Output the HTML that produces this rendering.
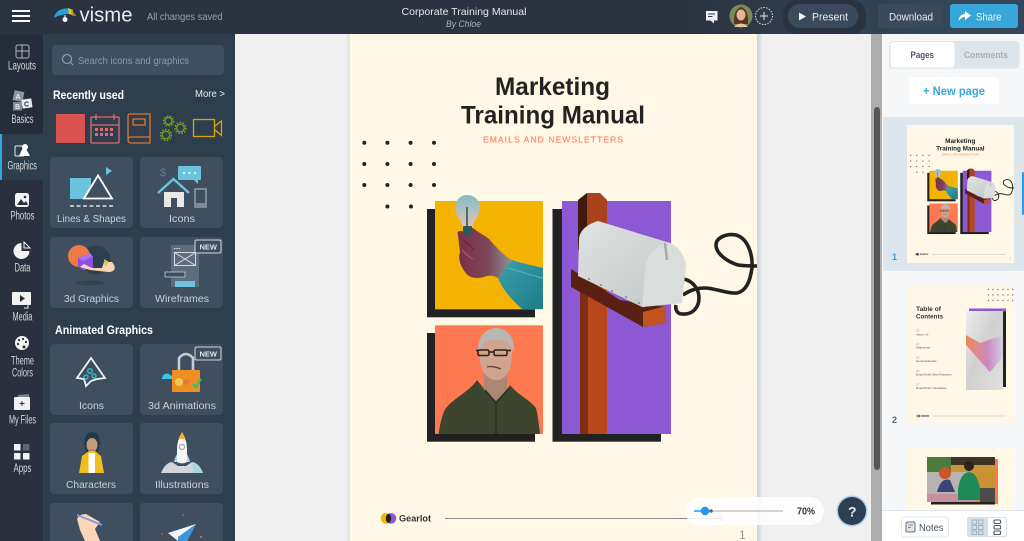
<!DOCTYPE html>
<html lang="en"><head><meta charset="utf-8"><title>Corporate Training Manual</title>
<style>
html,body{margin:0;padding:0;width:1024px;height:541px;overflow:hidden;background:#f0f0f0}
svg{display:block;filter:blur(.3px)}
text{font-family:"Liberation Sans",sans-serif}
.r{fill:#d5d9de;font-size:11.5px}
.l{fill:#c8cfd6;font-size:10px}
.t{fill:#3f4f60}
.h{fill:#fff;font-size:11.5px;font-weight:700}
</style></head><body>
<svg width="1024" height="541" viewBox="0 0 1024 541" xmlns="http://www.w3.org/2000/svg">
<defs>
<linearGradient id="bar" x1="0" x2="1" y1="0" y2="0"><stop offset=".66" stop-color="#2b3240"/><stop offset=".9" stop-color="#34465a"/><stop offset="1" stop-color="#34465a"/></linearGradient>
<linearGradient id="bulb" x1="0" x2="0" y1="0" y2="1"><stop offset="0" stop-color="#86bcc6"/><stop offset="1" stop-color="#e0c4b8"/></linearGradient>
<linearGradient id="hand" x1="0" x2="1" y1="0" y2="0"><stop offset="0" stop-color="#7a2f4a"/><stop offset=".55" stop-color="#7c4658"/><stop offset="1" stop-color="#8f9296"/></linearGradient>
<linearGradient id="sl" x1="0" x2="1" y1="0" y2="1"><stop offset="0" stop-color="#3aa1ab"/><stop offset="1" stop-color="#1f7b88"/></linearGradient>
<linearGradient id="box" x1="0" x2="1" y1="0" y2="1"><stop offset="0" stop-color="#dfe3e2"/><stop offset="1" stop-color="#c0c6c5"/></linearGradient>
<linearGradient id="sh" x1="0" x2="1" y1="0" y2="0"><stop offset="0" stop-color="#c9d2dc"/><stop offset="1" stop-color="#f0f0f0"/></linearGradient>
<linearGradient id="shl" x1="1" x2="0" y1="0" y2="0"><stop offset="0" stop-color="#dde2e8"/><stop offset="1" stop-color="#f0f0f0"/></linearGradient>
<linearGradient id="tocimg" x1="0" x2="1" y1="0" y2="1"><stop offset="0" stop-color="#eceded"/><stop offset=".45" stop-color="#d0d0d0"/><stop offset="1" stop-color="#e0e0e0"/></linearGradient>
<linearGradient id="tocp" x1="0" x2="1" y1="0" y2="0"><stop offset="0" stop-color="#f0875a"/><stop offset=".6" stop-color="#c98bc0"/><stop offset="1" stop-color="#d0d0e0"/></linearGradient>
<clipPath id="c1"><rect x="350" y="27" width="407" height="525"/></clipPath>
<clipPath id="t3"><rect x="907" y="447" width="107" height="63"/></clipPath>
<filter id="soft"><feGaussianBlur stdDeviation="2"/></filter>
</defs>

<!-- workspace -->
<rect width="1024" height="541" fill="#f0f0f0"/>
<rect x="345" y="34" width="5" height="507" fill="url(#shl)"/>
<rect x="757" y="34" width="6" height="507" fill="url(#sh)"/>
<rect x="871" y="34" width="11" height="507" fill="#adadad"/>
<rect x="874" y="107" width="6" height="363" rx="3" fill="#565656"/>

<!-- page -->
<g id="pg" clip-path="url(#c1)">
<rect x="350" y="27" width="407" height="525" fill="#fff8e6"/>
<text x="495" y="95" font-size="25" font-weight="700" fill="#222" textLength="115" lengthAdjust="spacingAndGlyphs">Marketing</text>
<text x="461" y="123.5" font-size="25" font-weight="700" fill="#222" textLength="184" lengthAdjust="spacingAndGlyphs">Training Manual</text>
<text x="483" y="142.5" font-size="8.500" fill="#ff8a68" stroke="#ff8a68" stroke-width=".2" textLength="140" lengthAdjust="spacing">EMAILS AND NEWSLETTERS</text>
<g fill="#222">
<circle cx="364.3" cy="142.7" r="2"/><circle cx="387.4" cy="142.7" r="2"/><circle cx="410.6" cy="142.7" r="2"/><circle cx="434" cy="142.7" r="2"/>
<circle cx="364.3" cy="164" r="2"/><circle cx="387.4" cy="164" r="2"/><circle cx="410.6" cy="164" r="2"/><circle cx="434" cy="164" r="2"/>
<circle cx="364.3" cy="185" r="2"/><circle cx="387.4" cy="185" r="2"/><circle cx="410.6" cy="185" r="2"/><circle cx="434" cy="185" r="2"/>
<circle cx="387.4" cy="206.5" r="2"/><circle cx="411" cy="206.5" r="2"/>
<!-- shadows -->
<rect x="427" y="209" width="108" height="108.300"/>
<rect x="427" y="333" width="108" height="108.700"/>
<rect x="552.500" y="209" width="108.500" height="232.700"/>
</g>
<rect x="435" y="201" width="108" height="108.300" fill="#f4b300"/>
<rect x="435" y="325.300" width="108" height="108.700" fill="#ff7950"/>
<rect x="562" y="201" width="109" height="233" fill="#8c58d4"/>
<!-- hand and bulb -->
<path d="M458 235C456 231 461 230 464 232L473 228C479 233 484 235 489 239C497 248 504 256 512 260L498 278C493 275 489 275 484 277C476 279 469 278 465 272C460 265 458 259 460 252Z" fill="url(#hand)"/>
<path d="M463 240C467 243 471 246 474 250" stroke="#5d2238" stroke-width="1" fill="none"/>
<path d="M462 250C466 254 469 257 473 259" stroke="#c05a5a" stroke-width="1" fill="none"/>
<path d="M512 260L522 263L543 268V309H522C512 300 503 290 498 278Z" fill="url(#sl)"/>
<path d="M508 268C520 271 532 276 543 278" stroke="#4cb3bd" stroke-width="1.200" fill="none"/>
<path d="M467 195C475 195 480 201 480 208C480 215 474 219 472 228H463C461 219 455 215 455 208C455 201 460 195 467 195Z" fill="url(#bulb)"/>
<path d="M467 207V226" stroke="#35565a" stroke-width="1.600"/>
<rect x="463" y="226" width="9" height="9" rx="1" fill="#2c5a5c"/>
<!-- man -->
<path d="M438.600 434C440 424 442 414 446 408C454 398 470 391 477 380L485 390H507L510 385C518 395 530 400 536 408C538 416 539 426 540 434Z" fill="#3e452f"/>
<path d="M484 368H507V390L496 401L484 390Z" fill="#ac8573"/>
<path d="M479 345C479 334 488 329 496 329C505 329 513 335 513 346L511 364C509 375 502 381 495 380C487 379 482 372 480 362Z" fill="#cfa592"/>
<path d="M478.500 353C476 338 486 328 496 328C507 328 515 337 514 353L511 346C508 341 502 339 497 339C490 339 484 341 481 346Z" fill="#b9b7b2"/>
<g fill="none" stroke="#2d1d18" stroke-width="1.500"><rect x="478" y="350" width="11" height="5.500" rx="1.500"/><rect x="494" y="350" width="13" height="5.500" rx="1.500"/><path d="M476 350.500H478M489 352H494M507 350.500H511"/></g>
<path d="M487 367C491 366 497 367 501 369" stroke="#6d4437" stroke-width="1.400" fill="none"/>
<path d="M485 390L496 403L509 388M496 403V434" stroke="#2a301f" stroke-width="1.600" fill="none"/>
<!-- mailbox -->
<path d="M578 200L587 193H600L607 200V250H578Z" fill="#a8431e"/>
<path d="M578 200L587 193V250H578Z" fill="#40190f"/>
<path d="M580 285H607V434H580Z" fill="#b8471c"/>
<path d="M580 285H588V434H580Z" fill="#7d2e14"/>
<path d="M571 269L571 287L643 327L665 323L666 307L620 300Z" fill="#5a2013"/>
<path d="M643 312L666 306L665 323L643 327Z" fill="#c4531f"/>
<path d="M684 279C692 281 699 288 699 298C699 308 692 315 682 314C677 314 675 309 676 305" fill="none" stroke="#222" stroke-width="3.600"/>
<path d="M683 295C689 291 695 288 705 288C715 288 727 294 737 293C746 291 750 282 752 268C753 253 747 238 736 235C726 233 716 238 716 245C716 254 728 262 738 265C745 266 751 266 757 266" fill="none" stroke="#222" stroke-width="3.600"/>
<path d="M579 240C579 232 585 225 598 221L667 242C677 245 683 252 686 265L682 303L642 307L578 276Z" fill="url(#box)"/>
<path d="M667 242C677 245 683 252 686 265L682 303L642 307L646 262C650 252 658 245 667 242Z" fill="#d9dddc"/>
<path d="M665 243L667 260" stroke="#a5abab" stroke-width="2.400"/>
<g fill="#555"><circle cx="589" cy="279" r=".8"/><circle cx="601" cy="285" r=".8"/><circle cx="612" cy="291" r=".8"/><circle cx="626" cy="297" r=".8"/><circle cx="639" cy="303" r=".8"/></g>
<!-- footer -->
<circle cx="386" cy="518.400" r="5.300" fill="#f4b300"/><circle cx="391" cy="518.400" r="5.300" fill="#8c58d4"/><ellipse cx="388.500" cy="518.400" rx="2.600" ry="4.500" fill="#222"/>
<text x="399" y="521.500" font-size="9" font-weight="700" fill="#333" textLength="32" lengthAdjust="spacingAndGlyphs">Gearlot</text>
<path d="M445 518.500H722M719 515.500L723 518.500L719 522" stroke="#888" fill="none"/>
<text x="739" y="539" font-size="12" fill="#999">1</text>
</g>

<!-- zoom pill -->
<rect x="685" y="497" width="139" height="28" rx="14" fill="#fff" fill-opacity=".85"/>
<path d="M705 511H783" stroke="#aaa"/><path d="M694 511H705" stroke="#2196f3" stroke-width="1.500"/>
<circle cx="711" cy="511" r="1.800" fill="#666"/><circle cx="705" cy="511" r="4.200" fill="#2196f3"/>
<text x="797" y="514.500" font-size="10" font-weight="700" fill="#333" textLength="18" lengthAdjust="spacingAndGlyphs">70%</text>
<circle cx="852" cy="511" r="15.500" fill="#b4cce6"/><circle cx="852" cy="511" r="14" fill="#2c3e50"/>
<text x="848" y="516.500" font-size="14" font-weight="700" fill="#e8edf2">?</text>

<!-- rail + panel -->
<rect x="0" y="34" width="43" height="507" fill="#2a303d"/>
<rect x="0" y="34" width="43" height="100" fill="#262d3a"/>
<rect x="43" y="34" width="192" height="507" fill="#2f3e4d"/>
<rect x="0" y="134" width="43" height="46" fill="#2f3e4d"/>
<rect x="0" y="134" width="2" height="46" fill="#35a7e0"/>

<!-- rail icons -->
<g fill="none" stroke="#aeb5bd" stroke-width="1"><rect x="16" y="45" width="13" height="13" rx="2"/><path d="M16 51H29M22 45V58"/></g>
<g font-size="7" font-weight="700">
<rect x="13.500" y="91" width="10" height="10" fill="#8a95a0" transform="rotate(12 18 96)"/><rect x="13" y="102" width="9" height="8.500" fill="#7b8a99"/><rect x="22" y="99" width="10" height="9" fill="#e9ecef" transform="rotate(-8 27 104)"/>
<text x="15.500" y="99" fill="#e9ecef">A</text><text x="15" y="109" fill="#e9ecef">B</text><text x="24" y="106.500" fill="#2a303d">C</text></g>
<rect x="15" y="146" width="9" height="10" rx="1" fill="none" stroke="#eee"/><path d="M24 145L30 156H19Z" fill="#fff"/><circle cx="25" cy="147" r="3" fill="#fff"/>
<rect x="15" y="193" width="14" height="14" rx="2.500" fill="#f2f2f2"/><path d="M17 205L21 199L24 203L26 201L28 205Z" fill="#2a303d"/><circle cx="25" cy="197" r="1.300" fill="#2a303d"/>
<path d="M21.500 243V251H29.500A8 8 0 1 1 21.500 243Z" fill="#f2f2f2"/><path d="M24 242L30 248H24Z" fill="none" stroke="#f2f2f2"/>
<rect x="12" y="292" width="19" height="13" rx="1" fill="#f2f2f2"/><path d="M20 295L25 298.500L20 302Z" fill="#2a303d"/><path d="M28 305V308L24 308" stroke="#f2f2f2" fill="none"/>
<circle cx="22" cy="343" r="7" fill="#f2f2f2"/><g fill="#2a303d"><circle cx="19" cy="340" r="1.100"/><circle cx="23" cy="339" r="1.100"/><circle cx="26" cy="342" r="1.100"/><circle cx="18" cy="344" r="1.100"/><circle cx="24" cy="347" r="1.500"/></g>
<path d="M18 395L29 394V397H18Z" fill="#7b838e"/><rect x="14" y="397" width="16" height="13" rx="1" fill="#f2f2f2"/><path d="M22 401V406M19.500 403.500H24.500" stroke="#2a303d"/>
<g fill="#f2f2f2"><rect x="14" y="444" width="6.500" height="6.500"/><rect x="14" y="453" width="6.500" height="6.500"/><rect x="23" y="453" width="6.500" height="6.500"/></g><rect x="23" y="444" width="6.500" height="6.500" fill="#5d6773"/>

<text class="r" x="8" y="69.500" textLength="28" lengthAdjust="spacingAndGlyphs">Layouts</text>
<text class="r" x="11.500" y="123" textLength="22" lengthAdjust="spacingAndGlyphs">Basics</text>
<text class="r" x="7.500" y="169.500" textLength="29.500" lengthAdjust="spacingAndGlyphs">Graphics</text>
<text class="r" x="10.500" y="219.500" textLength="24" lengthAdjust="spacingAndGlyphs">Photos</text>
<text class="r" x="14.500" y="271.500" textLength="16" lengthAdjust="spacingAndGlyphs">Data</text>
<text class="r" x="12.500" y="320.500" textLength="20" lengthAdjust="spacingAndGlyphs">Media</text>
<text class="r" x="11" y="364.500" textLength="23" lengthAdjust="spacingAndGlyphs">Theme</text>
<text class="r" x="12" y="376.500" textLength="21" lengthAdjust="spacingAndGlyphs">Colors</text>
<text class="r" x="9" y="423.500" textLength="27" lengthAdjust="spacingAndGlyphs">My Files</text>
<text class="r" x="13.500" y="472" textLength="18" lengthAdjust="spacingAndGlyphs">Apps</text>

<!-- search -->
<rect x="52" y="45" width="172" height="30" rx="4" fill="#3f4f60"/>
<circle cx="67" cy="59" r="4.500" fill="none" stroke="#97a3ae" stroke-width="1.100"/><path d="M70.500 62.500L73 65" stroke="#97a3ae" stroke-width="1.100"/>
<text x="78" y="64" font-size="10.500" fill="#8e9aa6" textLength="111" lengthAdjust="spacingAndGlyphs">Search icons and graphics</text>
<text class="h" x="53" y="99" textLength="71" lengthAdjust="spacingAndGlyphs">Recently used</text>
<text x="195" y="97" font-size="10" fill="#e8ecef" textLength="30" lengthAdjust="spacingAndGlyphs">More &gt;</text>

<!-- recent icons -->
<rect x="56" y="114" width="29" height="29" fill="#d9534f"/>
<g fill="none" stroke="#e06a6e" stroke-width="1.300"><rect x="91" y="117" width="28" height="26" rx="1"/><path d="M91 125H119M96 114V120M114 114V120"/></g>
<g fill="#e06a6e"><rect x="95" y="128" width="3" height="3"/><rect x="100" y="128" width="3" height="3"/><rect x="105" y="128" width="3" height="3"/><rect x="110" y="128" width="3" height="3"/><rect x="95" y="133" width="3" height="3"/><rect x="100" y="133" width="3" height="3"/><rect x="105" y="133" width="3" height="3"/><rect x="110" y="133" width="3" height="3"/></g>
<g fill="none" stroke="#e0762f" stroke-width="1.300"><path d="M128 138V116Q128 114 130 114H150V137H131Q128 137 128 140T131 143H150V137"/><rect x="133" y="119" width="12" height="6"/></g>
<g fill="none" stroke="#7fa61f"><circle cx="168.500" cy="121" r="3.500" stroke-width="1.200"/><circle cx="168.500" cy="121" r="5" stroke-width="1.400" stroke-dasharray="1.600 1.500"/><circle cx="180.500" cy="128" r="3.800" stroke-width="1.200"/><circle cx="180.500" cy="128" r="5.500" stroke-width="1.400" stroke-dasharray="1.600 1.500"/><circle cx="166" cy="135" r="3.800" stroke-width="1.200"/><circle cx="166" cy="135" r="5.500" stroke-width="1.400" stroke-dasharray="1.600 1.500"/></g>
<g fill="none" stroke="#d9a514" stroke-width="1.300"><rect x="193.500" y="119.500" width="21" height="17"/><path d="M215 126L221.500 121V135.500L215 130"/></g>

<!-- tiles -->
<rect class="t" x="50" y="157" width="83" height="71" rx="4"/><rect class="t" x="140" y="157" width="83" height="71" rx="4"/>
<rect class="t" x="50" y="237" width="83" height="71" rx="4"/><rect class="t" x="140" y="237" width="83" height="71" rx="4"/>
<rect class="t" x="50" y="344" width="83" height="71" rx="4"/><rect class="t" x="140" y="344" width="83" height="71" rx="4"/>
<rect class="t" x="50" y="423" width="83" height="71" rx="4"/><rect class="t" x="140" y="423" width="83" height="71" rx="4"/>
<rect class="t" x="50" y="503" width="83" height="50" rx="4"/><rect class="t" x="140" y="503" width="83" height="50" rx="4"/>

<text class="l" x="57" y="222" textLength="69" lengthAdjust="spacingAndGlyphs">Lines &amp; Shapes</text>
<text class="l" x="169" y="222" textLength="26" lengthAdjust="spacingAndGlyphs">Icons</text>
<text class="l" x="64" y="302" textLength="55" lengthAdjust="spacingAndGlyphs">3d Graphics</text>
<text class="l" x="155" y="302" textLength="54" lengthAdjust="spacingAndGlyphs">Wireframes</text>
<text class="h" x="55" y="334" textLength="98" lengthAdjust="spacingAndGlyphs">Animated Graphics</text>
<text class="l" x="79" y="409" textLength="25" lengthAdjust="spacingAndGlyphs">Icons</text>
<text class="l" x="148" y="409" textLength="68" lengthAdjust="spacingAndGlyphs">3d Animations</text>
<text class="l" x="66" y="488" textLength="50" lengthAdjust="spacingAndGlyphs">Characters</text>
<text class="l" x="155" y="488" textLength="54" lengthAdjust="spacingAndGlyphs">Illustrations</text>

<!-- lines & shapes -->
<rect x="70" y="178" width="21" height="21" fill="#6cc3dd"/><path d="M84 198.500L98 175.500L112 198.500Z" fill="#3f4f60" stroke="#fff" stroke-width="1.800"/><path d="M106 167L112 171L106 175Z" fill="#6cc3dd"/><path d="M70 206H113" stroke="#fff" stroke-width="1.200" stroke-dasharray="4 2.500"/>
<!-- icons -->
<text x="160" y="176" font-size="11" fill="#6d7c8b">$</text>
<path d="M179 166H200Q201 166 201 167V179Q201 180 200 180H198V184L194 180H179Q178 180 178 179V167Q178 166 179 166Z" fill="#6cc3dd"/><g fill="#fff"><circle cx="184" cy="173" r="1"/><circle cx="189.500" cy="173" r="1"/><circle cx="195" cy="173" r="1"/></g>
<path d="M164 192H184V207H177V198H171V207H164Z" fill="#e8e8e8"/><path d="M158 193L173.500 179L189 193" fill="none" stroke="#6cc3dd" stroke-width="2.400"/>
<rect x="194" y="188" width="13" height="20" rx="1" fill="#7d8a98"/><rect x="196" y="190" width="9" height="13" fill="#3f4f60"/>
<!-- 3d -->
<ellipse cx="90" cy="283" rx="14" ry="2.500" fill="#35434f"/><circle cx="96" cy="260" r="14.500" fill="#2c3e50"/><circle cx="79" cy="256" r="11" fill="#ef7a45"/>
<path d="M78 258L90 253L93 257V268L83 270L78 266Z" fill="#8b4fe0"/><path d="M78 258L90 253L93 257L83 261Z" fill="#a874ee"/>
<path d="M104 262L112 262C117 268 115 272 108 272L90 270L80 267L84 264L92 268L102 268Z" fill="#f5d4b2"/><path d="M104 259L109 262L105 267Z" fill="#d0d13a"/>
<!-- wireframes -->
<rect x="171" y="245" width="28" height="42" rx="1" fill="#5d6d7e"/><path d="M174.500 252.500H195.500V265.500H174.500ZM174.500 252.500L195.500 265.500M195.500 252.500L174.500 265.500" fill="none" stroke="#d5dadf"/><rect x="165" y="272" width="20" height="5" fill="#3f4f60" stroke="#c2c9d0" stroke-width=".8"/><rect x="175" y="281" width="20" height="6" fill="#6cc3dd"/><path d="M174 248.500H180" stroke="#dfe4e8" stroke-dasharray="1.400 1"/>
<rect x="195" y="240" width="26" height="13" rx="1.500" fill="#3f4f60" stroke="#cfd5da"/><text x="199.500" y="249.500" font-size="7.500" font-weight="700" fill="#dfe4e8">NEW</text>
<!-- anim icons -->
<path d="M91 358L77 378L84 379L86 386L91 381L97 379L105 378Z" fill="none" stroke="#f0f2f4" stroke-width="1.800"/><g fill="none" stroke="#37b6c4" stroke-width="1.500"><circle cx="90" cy="371" r="2.300"/><circle cx="86" cy="377" r="2"/><circle cx="94" cy="376" r="2"/></g>
<!-- 3d anim -->
<path d="M179 370V358Q186 350 193 358V370" fill="none" stroke="#c9cdd0" stroke-width="2.600"/><path d="M162 378Q164 372 169 374L172 376V379H162Z" fill="#35c6ea"/><rect x="172" y="370" width="28" height="22" rx="1" fill="#ee8f22"/><circle cx="179" cy="382" r="4" fill="#f3c74e"/><circle cx="186" cy="382" r="3" fill="#e8754a"/><path d="M193 384L196 387L201 379" fill="none" stroke="#25c26d" stroke-width="2"/>
<rect x="195" y="347" width="26" height="13" rx="1.500" fill="#3f4f60" stroke="#cfd5da"/><text x="199.500" y="356.500" font-size="7.500" font-weight="700" fill="#dfe4e8">NEW</text>
<!-- character -->
<path d="M84 444Q85 432 92 432Q100 432 100 444L98 452H86Z" fill="#1f3a4a"/><ellipse cx="92" cy="445" rx="5.500" ry="7" fill="#c49a77"/><rect x="89" y="449" width="6" height="6" fill="#b48a68"/>
<path d="M79 473L82 456L89 451H95L101 456L104 473Z" fill="#f2bd1d"/><rect x="88.500" y="453" width="6.500" height="20" fill="#fff"/>
<!-- rocket -->
<path d="M161 473Q165 463 172 462L178 466H186L192 462Q199 463 203 473Z" fill="#d2d6da"/><path d="M192 462Q199 463 203 473H193Z" fill="#a6d6e6"/>
<path d="M175 458L178 452V462H174ZM189 458L186 452V462H190Z" fill="#a6d6e6"/><path d="M177 449Q177 440 182 434Q187 440 187 449V462Q182 465 177 462Z" fill="#f4f6f7"/><path d="M178.500 439Q180 435 182 432Q184 435 185.500 439Z" fill="#f2b632"/><circle cx="182" cy="447" r="2.500" fill="none" stroke="#9aa6b2" stroke-width="1.200"/>
<!-- hand row -->
<path d="M77 519Q79 514 86 514L100 522L95 529L100 541H85L80 530Z" fill="#f9d6b7"/><path d="M77 515L102 525" stroke="#7d9de0" stroke-width="1.800"/>
<path d="M168 533L196 524L187 541H178Z" fill="#f3f8fc"/><path d="M196 524L178 537V541L187 541Z" fill="#3d96dc"/><g><circle cx="183" cy="515" r="1" fill="#3d86c6"/><circle cx="162" cy="534" r="1" fill="#c24a4a"/><circle cx="201" cy="537" r="1" fill="#b58a3e"/></g>

<!-- right panel -->
<rect x="882" y="34" width="142" height="507" fill="#f5f7f8"/>
<rect x="889" y="41" width="130.500" height="27.500" rx="4" fill="#dde4ea"/><rect x="890.500" y="42" width="64" height="25.500" rx="3" fill="#fff"/>
<text x="910.500" y="58" font-size="9.500" font-weight="700" fill="#4a5563" textLength="23.500" lengthAdjust="spacingAndGlyphs">Pages</text>
<text x="964" y="58" font-size="9.500" font-weight="700" fill="#a6adb6" textLength="44" lengthAdjust="spacingAndGlyphs">Comments</text>
<rect x="909" y="77" width="90" height="27" rx="3" fill="#fff"/>
<text x="923" y="95" font-size="11.500" font-weight="700" fill="#3aa9d8" textLength="62" lengthAdjust="spacingAndGlyphs">+ New page</text>

<rect x="883" y="117" width="141" height="154" fill="#dde5ed"/>
<rect x="1022" y="172" width="2" height="43" rx="1" fill="#2f9be8"/>
<rect x="907" y="125" width="107" height="138" rx="2" fill="#fff8e6"/>
<use href="#pg" transform="translate(907 125) scale(.263) translate(-350 -27)"/>
<text x="892" y="260" font-size="9" font-weight="700" fill="#3a9be0">1</text>

<!-- thumb 2 -->
<rect x="907" y="286" width="107" height="137" rx="2" fill="#fff8e6"/>
<text x="916" y="310.800" font-size="6.500" font-weight="700" fill="#333" textLength="25" lengthAdjust="spacingAndGlyphs">Table of</text>
<text x="916" y="318.500" font-size="6.500" font-weight="700" fill="#333" textLength="27" lengthAdjust="spacingAndGlyphs">Contents</text>
<g font-size="3" fill="#ff8a68"><text x="916" y="331.500">03</text><text x="916" y="345">04</text><text x="916" y="358.500">05</text><text x="916" y="372">06</text><text x="916" y="385.500">07</text></g>
<g font-size="3" fill="#555"><text x="916" y="335.500">About Us</text><text x="916" y="348.500">Objectives</text><text x="916" y="362">General Emails</text><text x="916" y="375.500">Email Draft: Best Practices</text><text x="916" y="389">Email Draft: Newsletter</text></g>
<rect x="1003" y="311" width="3" height="76" fill="#222"/><rect x="969" y="308.500" width="37" height="3" fill="#8c58d4"/>
<rect x="966" y="311" width="37" height="79" fill="url(#tocimg)"/>
<path d="M966 335L980 343L1003 335V357L990 372L966 345Z" fill="url(#tocp)"/>
<g fill="#777"><circle cx="988.500" cy="289.500" r=".7"/><circle cx="993" cy="289.500" r=".7"/><circle cx="998" cy="289.500" r=".7"/><circle cx="1003" cy="289.500" r=".7"/><circle cx="1008" cy="289.500" r=".7"/><circle cx="1012.500" cy="289.500" r=".7"/><circle cx="988.500" cy="295" r=".7"/><circle cx="993" cy="295" r=".7"/><circle cx="998" cy="295" r=".7"/><circle cx="1003" cy="295" r=".7"/><circle cx="1008" cy="295" r=".7"/><circle cx="1012.500" cy="295" r=".7"/><circle cx="988.500" cy="300.500" r=".7"/><circle cx="993" cy="300.500" r=".7"/><circle cx="998" cy="300.500" r=".7"/><circle cx="1003" cy="300.500" r=".7"/><circle cx="1008" cy="300.500" r=".7"/><circle cx="1012.500" cy="300.500" r=".7"/></g>
<circle cx="917.500" cy="416" r="1.400" fill="#f4b300"/><circle cx="919" cy="416" r="1.400" fill="#8c58d4"/><rect x="921" y="415.300" width="8" height="1.300" fill="#666"/><path d="M933 416H1006" stroke="#bbb" stroke-width=".6"/>
<text x="892" y="423" font-size="9" font-weight="700" fill="#5b6673">2</text>

<!-- thumb 3 -->
<g clip-path="url(#t3)">
<rect x="907" y="447" width="107" height="90" rx="2" fill="#fff8e6"/>
<rect x="995" y="459" width="3" height="45" fill="#ff7950"/><rect x="931" y="502" width="64" height="2.500" fill="#222"/>
<rect x="927" y="457" width="68" height="45" fill="#c99232"/><rect x="927" y="457" width="24" height="22" fill="#4e7a3d"/><rect x="951" y="457" width="44" height="8" fill="#3c3527"/>
<rect x="927" y="472" width="45" height="24" fill="#b7b3b0"/><rect x="927" y="494" width="48" height="8" fill="#c8909d"/>
<circle cx="945" cy="473" r="6" fill="#c9562a"/><path d="M937 492Q941 477 950 480L955 492Z" fill="#3b4478"/><circle cx="969" cy="466" r="5" fill="#2c2320"/><path d="M958 490Q960 472 970 472Q978 474 980 490L984 500H958Z" fill="#1e8a55"/><rect x="980" y="488" width="15" height="14" fill="#4b4b4b"/>
</g>

<!-- panel footer -->
<rect x="882" y="510" width="142" height="31" fill="#fff"/><path d="M882 510.500H1024" stroke="#dfe5ea"/>
<rect x="901.500" y="517" width="47" height="20" rx="3" fill="#fff" stroke="#e3e8ed"/><rect x="906" y="522" width="9" height="10" rx="1.500" fill="#dfe5ea" stroke="#66717d"/><path d="M908 525H913M908 527.500H911" stroke="#66717d" stroke-width=".8"/>
<text x="919" y="531" font-size="10" fill="#4a5563" textLength="24.500" lengthAdjust="spacingAndGlyphs">Notes</text>
<rect x="967" y="517" width="40" height="20" rx="2" fill="#d5dfe8"/><rect x="988" y="518" width="18" height="18" rx="2" fill="#fff"/>
<g fill="none" stroke="#a8b2bc"><rect x="972" y="520" width="4.500" height="4"/><rect x="978.500" y="520" width="4.500" height="4"/><rect x="972" y="525.500" width="4.500" height="4"/><rect x="978.500" y="525.500" width="4.500" height="4"/><rect x="972" y="531" width="4.500" height="3.500"/><rect x="978.500" y="531" width="4.500" height="3.500"/></g>
<g fill="none" stroke="#4e5a66" stroke-width="1.100"><rect x="994" y="520" width="6.500" height="3.500" rx="1"/><rect x="994" y="525.500" width="6.500" height="3.500" rx="1"/><rect x="994" y="531" width="6.500" height="3.500" rx="1"/></g>

<!-- top bar -->
<rect width="1024" height="34" fill="url(#bar)"/>
<path d="M12 11H30M12 16H30M12 21H30" stroke="#fff" stroke-width="2"/>
<path d="M54 18C55 11 62 7.500 69 8.500L69.500 14C63 14 58 15.500 54 18Z" fill="#21a3d8"/><path d="M68 8L73 10L72 15L69 14Z" fill="#f2c21f"/><path d="M71 10L75 14L72 16Z" fill="#7bb52c"/><path d="M72 14.500H76V16H72Z" fill="#e3483c"/><circle cx="65" cy="19.500" r="2.500" fill="#fff"/><path d="M65 15V19" stroke="#fff"/>
<text x="79.500" y="21.500" font-size="20" fill="#e9ecef" textLength="53" lengthAdjust="spacingAndGlyphs">visme</text>
<text x="147" y="20" font-size="10.500" fill="#98a1ab" textLength="75.500" lengthAdjust="spacingAndGlyphs">All changes saved</text>
<text x="401.500" y="15" font-size="10.500" fill="#e6e8ea" textLength="125" lengthAdjust="spacingAndGlyphs">Corporate Training Manual</text>
<text x="446" y="27" font-size="9" font-style="italic" fill="#aab0b8" textLength="35" lengthAdjust="spacingAndGlyphs">By Chloe</text>
<path d="M706 11H717.500V20.500H714V23.500L710.500 20.500H706Z" fill="#f2f2f2"/><path d="M708 14H715M708 16.500H712.500" stroke="#2f3c4c"/>
<circle cx="741" cy="16" r="11.500" fill="#7c8a55"/><path d="M734 24Q733 10 741 7Q749 9 748 24Z" fill="#5b3524"/><ellipse cx="741" cy="15" rx="4.500" ry="5.500" fill="#e4b596"/><path d="M734 27Q741 20 748 27Z" fill="#e8c0a5"/>
<circle cx="764" cy="16" r="8.500" fill="none" stroke="#e5e8ea" stroke-dasharray="1.500 1.300"/><path d="M760 16H768M764 12V20" stroke="#e5e8ea"/>
<rect x="783" y="0" width="83" height="34" rx="14" fill="#2a3240"/>
<rect x="788" y="4" width="70" height="24" rx="12" fill="#3a4a5c"/><path d="M799 12.500L806 16.500L799 20.500Z" fill="#f2f2f2"/>
<text x="812" y="20.500" font-size="11" fill="#e8eaec" textLength="36" lengthAdjust="spacingAndGlyphs">Present</text>
<rect x="878" y="4" width="65" height="24" rx="3" fill="#3a4a5c"/>
<text x="889" y="20.500" font-size="11" fill="#e8eaec" textLength="44" lengthAdjust="spacingAndGlyphs">Download</text>
<rect x="950" y="4" width="68" height="24" rx="3" fill="#37a6d8"/>
<path d="M958.500 21Q959 14.500 965 14V11L971 15.500L965 20V17Q961.500 17 958.500 21Z" fill="#fff"/>
<text x="976" y="20.500" font-size="11" fill="#eef7fb" textLength="25.500" lengthAdjust="spacingAndGlyphs">Share</text>
</svg>
</body></html>
